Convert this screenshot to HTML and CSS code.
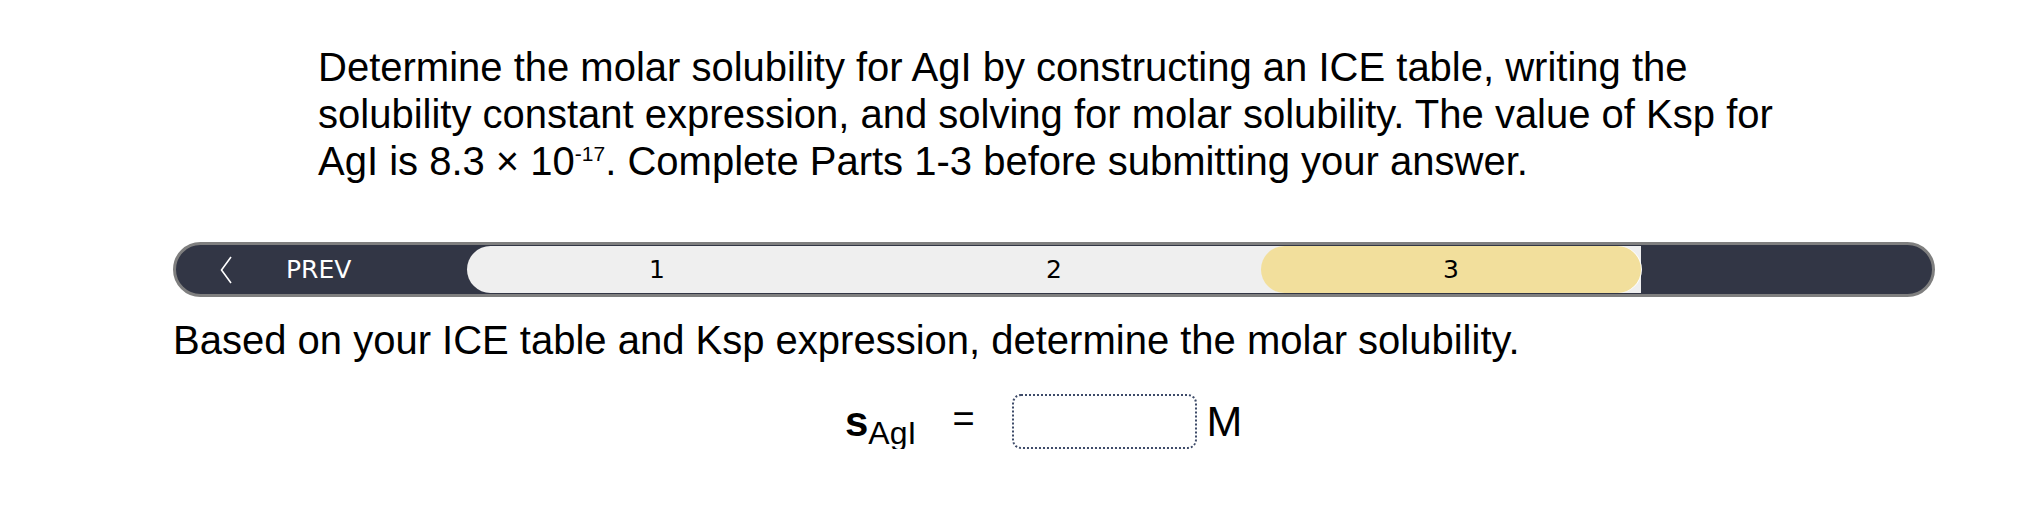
FILE: index.html
```html
<!DOCTYPE html>
<html lang="en">
<head>
<meta charset="utf-8">
<title>Molar solubility of AgI</title>
<link rel="stylesheet" href="styles.css">
</head>
<body>
<main class="page">
  <p class="intro">Determine the molar solubility for AgI by constructing an ICE table, writing the solubility constant expression, and solving for molar solubility. The value of Ksp for AgI is 8.3 × 10<sup>-17</sup>. Complete Parts 1-3 before submitting your answer.</p>

  <nav class="stepper">
    <button class="prev" type="button">
      <svg class="chev" width="12" height="28" viewBox="0 0 12 28" aria-hidden="true"><polyline points="11,1 1.5,14 11,27" fill="none" stroke="#ffffff" stroke-width="1.6"/></svg>
      <span class="prev-label">PREV</span>
    </button>
    <div class="steps">
      <span class="step">1</span>
      <span class="step">2</span>
      <span class="step step-active">3</span>
    </div>
    <div class="next"></div>
  </nav>

  <section class="part">
    <p class="prompt">Based on your ICE table and Ksp expression, determine the molar solubility.</p>
    <div class="answer">
      <span class="var">s<sub>AgI</sub></span>
      <span class="eq">=</span>
      <span class="field" role="textbox" aria-label="molar solubility"></span>
      <span class="unit">M</span>
    </div>
  </section>
</main>
</body>
</html>
```

FILE: styles.css
```css
html, body {
  margin: 0;
  padding: 0;
  background: #ffffff;
}

body {
  font-family: "Liberation Sans", Arial, Helvetica, sans-serif;
  color: #000000;
}

.page {
  padding: 44px 0 0 0;
}

.intro {
  margin: 0 0 0 318px;
  width: 1490px;
  font-size: 40px;
  line-height: 47px;
}

.intro sup {
  font-size: 21px;
  line-height: 0;
  vertical-align: 14px;
}

.stepper {
  margin: 57px 0 0 173px;
  width: 1762px;
  box-sizing: border-box;
  height: 55px;
  border: 3px solid #7f7f7f;
  border-radius: 28px;
  background: #323645;
  display: flex;
  align-items: center;
  padding: 1px 0;
}

.prev {
  width: 291px;
  height: 47px;
  flex: none;
  border: 0;
  background: transparent;
  display: flex;
  align-items: center;
  padding: 0 0 0 44px;
  color: #ffffff;
  font-family: "DejaVu Sans", "Liberation Sans", sans-serif;
  font-size: 25px;
  cursor: pointer;
}

.chev {
  display: block;
  flex: none;
}

.prev-label {
  margin-left: 54px;
}

.steps {
  width: 1174px;
  height: 47px;
  flex: none;
  background: #efefef;
  border-radius: 24px 0 0 24px;
  display: grid;
  grid-template-columns: 380px 414px 380px;
  align-items: stretch;
}

.step {
  display: flex;
  align-items: center;
  justify-content: center;
  font-family: "DejaVu Sans", "Liberation Sans", sans-serif;
  font-size: 25px;
  color: #000000;
}

.step-active {
  background: #f2df9c;
  border-radius: 24px;
  box-shadow: 1px 0 0 #ffffff;
}

.next {
  flex: 1;
}

.part {
  margin: 20px 0 0 173px;
  width: 1762px;
}

.prompt {
  margin: 0;
  font-size: 40px;
  line-height: 47px;
}

.answer {
  margin-top: 30px;
  display: flex;
  align-items: center;
  padding-left: 672px;
}

.var {
  font-weight: bold;
  font-size: 42px;
  line-height: 55px;
}

.var sub {
  font-weight: normal;
  font-size: 32px;
  line-height: 0;
  vertical-align: -8px;
}

.eq {
  margin-left: 36px;
  font-size: 38px;
  line-height: 55px;
  position: relative;
  top: -2px;
}

.field {
  margin-left: 37px;
  width: 185px;
  height: 55px;
  box-sizing: border-box;
  border: 2px dotted #3d4a68;
  border-radius: 9px;
  background: #ffffff;
}

.unit {
  margin-left: 10px;
  font-size: 43px;
  line-height: 55px;
}
```
